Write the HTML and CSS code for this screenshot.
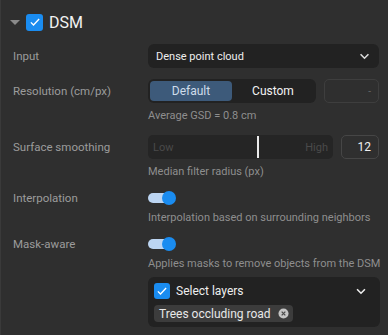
FILE: index.html
```html
<!DOCTYPE html>
<html lang="en">
<head>
    <meta charset="UTF-8">
    <meta name="viewport" content="width=device-width, initial-scale=1.0">
    <title>DSM</title>
    <link rel="stylesheet" href="styles.css">
</head>
<body>
    <div class="panel">
        <header class="panel-head">
            <span class="caret"></span>
            <span class="check">
                <svg viewBox="0 0 16 16" width="12" height="12"><path d="M2.5 8.5l3.5 3.5 7.5-8" fill="none" stroke="#fff" stroke-width="1.8"/></svg>
            </span>
            <h2>DSM</h2>
        </header>

        <div class="row">
            <div class="label">Input</div>
            <div class="field">
                <div class="select">
                    <span>Dense point cloud</span>
                    <svg class="chev" viewBox="0 0 12 8" width="11" height="7"><path d="M1.5 1.5l4.5 4.5 4.5-4.5" fill="none" stroke="#ddd" stroke-width="1.8"/></svg>
                </div>
            </div>
        </div>

        <div class="row">
            <div class="label">Resolution (cm/px)</div>
            <div class="field">
                <div class="inline">
                    <div class="segmented">
                        <span class="seg active">Default</span>
                        <span class="seg">Custom</span>
                    </div>
                    <div class="num-box disabled"><span class="dash">-</span></div>
                </div>
                <p class="hint">Average GSD = 0.8 cm</p>
            </div>
        </div>

        <div class="row">
            <div class="label">Surface smoothing</div>
            <div class="field">
                <div class="inline">
                    <div class="slider">
                        <span>Low</span>
                        <span>High</span>
                        <i class="thumb"></i>
                    </div>
                    <div class="num-box">12</div>
                </div>
                <p class="hint">Median filter radius (px)</p>
            </div>
        </div>

        <div class="row toggle-row">
            <div class="label">Interpolation</div>
            <div class="field">
                <span class="toggle"><i></i></span>
                <p class="hint">Interpolation based on surrounding neighbors</p>
            </div>
        </div>

        <div class="row toggle-row">
            <div class="label">Mask-aware</div>
            <div class="field">
                <span class="toggle"><i></i></span>
                <p class="hint">Applies masks to remove objects from the DSM</p>
                <div class="layers">
                    <div class="layers-head">
                        <span class="check small">
                            <svg viewBox="0 0 16 16" width="12" height="12"><path d="M2.5 8.5l3.5 3.5 7.5-8" fill="none" stroke="#fff" stroke-width="1.8"/></svg>
                        </span>
                        <span class="layers-title">Select layers</span>
                        <svg class="chev" viewBox="0 0 12 8" width="12" height="7"><path d="M1.5 1.5l4.5 4.5 4.5-4.5" fill="none" stroke="#eee" stroke-width="1.8"/></svg>
                    </div>
                    <span class="chip">Trees occluding road
                        <svg viewBox="0 0 12 12" width="11" height="11"><circle cx="6" cy="6" r="5.5" fill="#c4c4c4"/><path d="M4 4l4 4M8 4l-4 4" stroke="#4a4a4a" stroke-width="1.4"/></svg>
                    </span>
                </div>
            </div>
        </div>
    </div>
</body>
</html>
```

FILE: styles.css
```css
body {
  margin: 0;
  background: #2f2f2f;
  font-family: Roboto, "Liberation Sans", sans-serif;
  font-size: 11.5px;
  color: #e6e6e6;
}

.panel {
  height: 335px;
  border-left: 1px solid #3a3a3a;
  padding: 0 9px 0 12px;
  box-sizing: border-box;
  overflow: hidden;
}

.panel-head {
  display: flex;
  align-items: center;
  height: 44px;
}

.caret {
  width: 0;
  height: 0;
  border-left: 5px solid transparent;
  border-right: 5px solid transparent;
  border-top: 5px solid #8a8a8a;
  margin: 1px 6px 0 -3px;
}

.check {
  width: 17px;
  height: 17px;
  border-radius: 3px;
  background: #1a8cf0;
  display: flex;
  align-items: center;
  justify-content: center;
}

.panel-head h2 {
  margin: 0 0 0 6px;
  font-size: 16px;
  font-weight: 400;
  color: #f2f2f2;
}

.row {
  display: flex;
  margin-bottom: 11px;
}

.label {
  width: 135px;
  color: #9c9c9c;
  line-height: 24px;
  flex-shrink: 0;
}

.toggle-row .label {
  line-height: 14px;
}

.field {
  flex: 1;
}

.select {
  height: 24px;
  background: #222;
  border-radius: 6px;
  display: flex;
  align-items: center;
  justify-content: space-between;
  padding: 0 9px 0 8px;
  color: #eee;
  font-size: 11px;
}

.inline {
  display: flex;
  gap: 8px;
}

.segmented {
  width: 168px;
  height: 24px;
  background: #222;
  border-radius: 6px;
  display: flex;
  padding: 2px;
  box-sizing: border-box;
}

.seg {
  flex: 1;
  display: flex;
  align-items: center;
  justify-content: center;
  border-radius: 4px;
  color: #f2f2f2;
  font-size: 12px;
}

.seg.active {
  background: #3d5a7a;
  color: #cfdcea;
}

.num-box {
  flex: 1;
  height: 24px;
  border: 1px solid #464646;
  border-radius: 5px;
  box-sizing: border-box;
  display: flex;
  align-items: center;
  justify-content: flex-end;
  padding-right: 7px;
  color: #f0f0f0;
  font-size: 12px;
}

.num-box.disabled {
  border-color: #3e3e3e;
}

.dash {
  color: #666;
  font-size: 10px;
}

.hint {
  margin: 5px 0 0;
  color: #8e8e8e;
  line-height: 16px;
  font-size: 11px;
  white-space: nowrap;
}

.slider {
  position: relative;
  width: 185px;
  height: 24px;
  background: #252525;
  border-radius: 5px;
  display: flex;
  align-items: center;
  justify-content: space-between;
  padding: 0 5px;
  box-sizing: border-box;
  color: #4a4a4a;
  font-size: 11px;
}

.slider .thumb {
  position: absolute;
  left: 109px;
  top: 1px;
  width: 2px;
  height: 22px;
  background: #eaeaea;
}

.toggle {
  position: relative;
  display: block;
  width: 28px;
  height: 14px;
}

.toggle::before {
  content: "";
  position: absolute;
  left: 0;
  top: 2px;
  width: 24px;
  height: 10px;
  border-radius: 5px;
  background: #bcd5f2;
}

.toggle i {
  position: absolute;
  right: 0;
  top: 0;
  width: 14px;
  height: 14px;
  border-radius: 50%;
  background: #1a8cf0;
}

.layers {
  margin-top: 5px;
  background: #222;
  border-radius: 6px;
  padding: 6px 6px 5px;
}

.layers-head {
  display: flex;
  align-items: center;
  height: 16px;
}

.check.small {
  width: 16px;
  height: 16px;
}

.layers-title {
  flex: 1;
  margin-left: 6px;
  color: #eee;
  font-size: 12px;
}

.layers-head .chev {
  margin-right: 7px;
}

.chip {
  display: inline-flex;
  align-items: center;
  gap: 7px;
  margin-top: 6px;
  height: 17px;
  padding: 0 4px 0 5px;
  background: #3c3c3c;
  border-radius: 4px;
  color: #e8e8e8;
  font-size: 12px;
}
```
